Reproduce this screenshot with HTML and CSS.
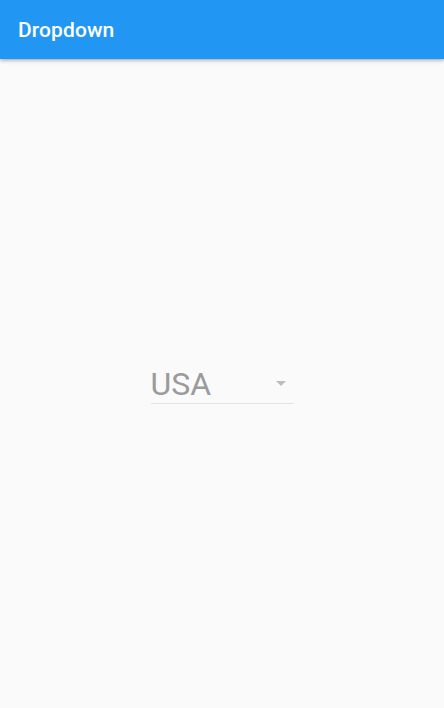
FILE: index.html
```html
<!DOCTYPE html>
<html lang="en">
<head>
<meta charset="utf-8">
<title>Dropdown</title>
<link rel="stylesheet" href="styles.css">
</head>
<body>
<header class="appbar">
  <h1 class="appbar-title">Dropdown</h1>
</header>
<main class="content">
  <div class="dropdown">
    <span class="dropdown-value">USA</span>
    <svg class="dropdown-icon" width="24" height="24" viewBox="0 0 24 24" aria-hidden="true"><path d="M7 10l5 5 5-5z"/></svg>
  </div>
</main>
</body>
</html>
```
FILE: styles.css
```css
html, body {
  margin: 0;
  padding: 0;
  height: 100%;
}
body {
  background: #fafafa;
  font-family: Roboto, "Noto Sans", "Liberation Sans", sans-serif;
  display: flex;
  flex-direction: column;
}
.appbar {
  height: 59px;
  background: #2196f3;
  box-shadow: 0 2px 4px rgba(0,0,0,0.22), 0 1px 2px rgba(0,0,0,0.12);
  display: flex;
  align-items: center;
  padding-left: 18px;
  flex-shrink: 0;
  position: relative;
  z-index: 1;
}
.appbar-title {
  margin: 0;
  color: #ffffff;
  font-size: 21px;
  font-weight: 500;
  letter-spacing: 0.1px;
  line-height: 1;
  padding-top: 1px;
}
.content {
  flex: 1;
  display: flex;
  align-items: center;
  justify-content: center;
}
.dropdown {
  width: 143px;
  display: flex;
  align-items: center;
  justify-content: space-between;
  border-bottom: 1px solid #e3e3e3;
}
.dropdown-value {
  font-size: 32px;
  color: #9b9b9b;
  line-height: normal;
  padding-top: 1px;
}
.dropdown-icon {
  fill: #bdbdbd;
  display: block;
  margin-right: 1px;
}
```
